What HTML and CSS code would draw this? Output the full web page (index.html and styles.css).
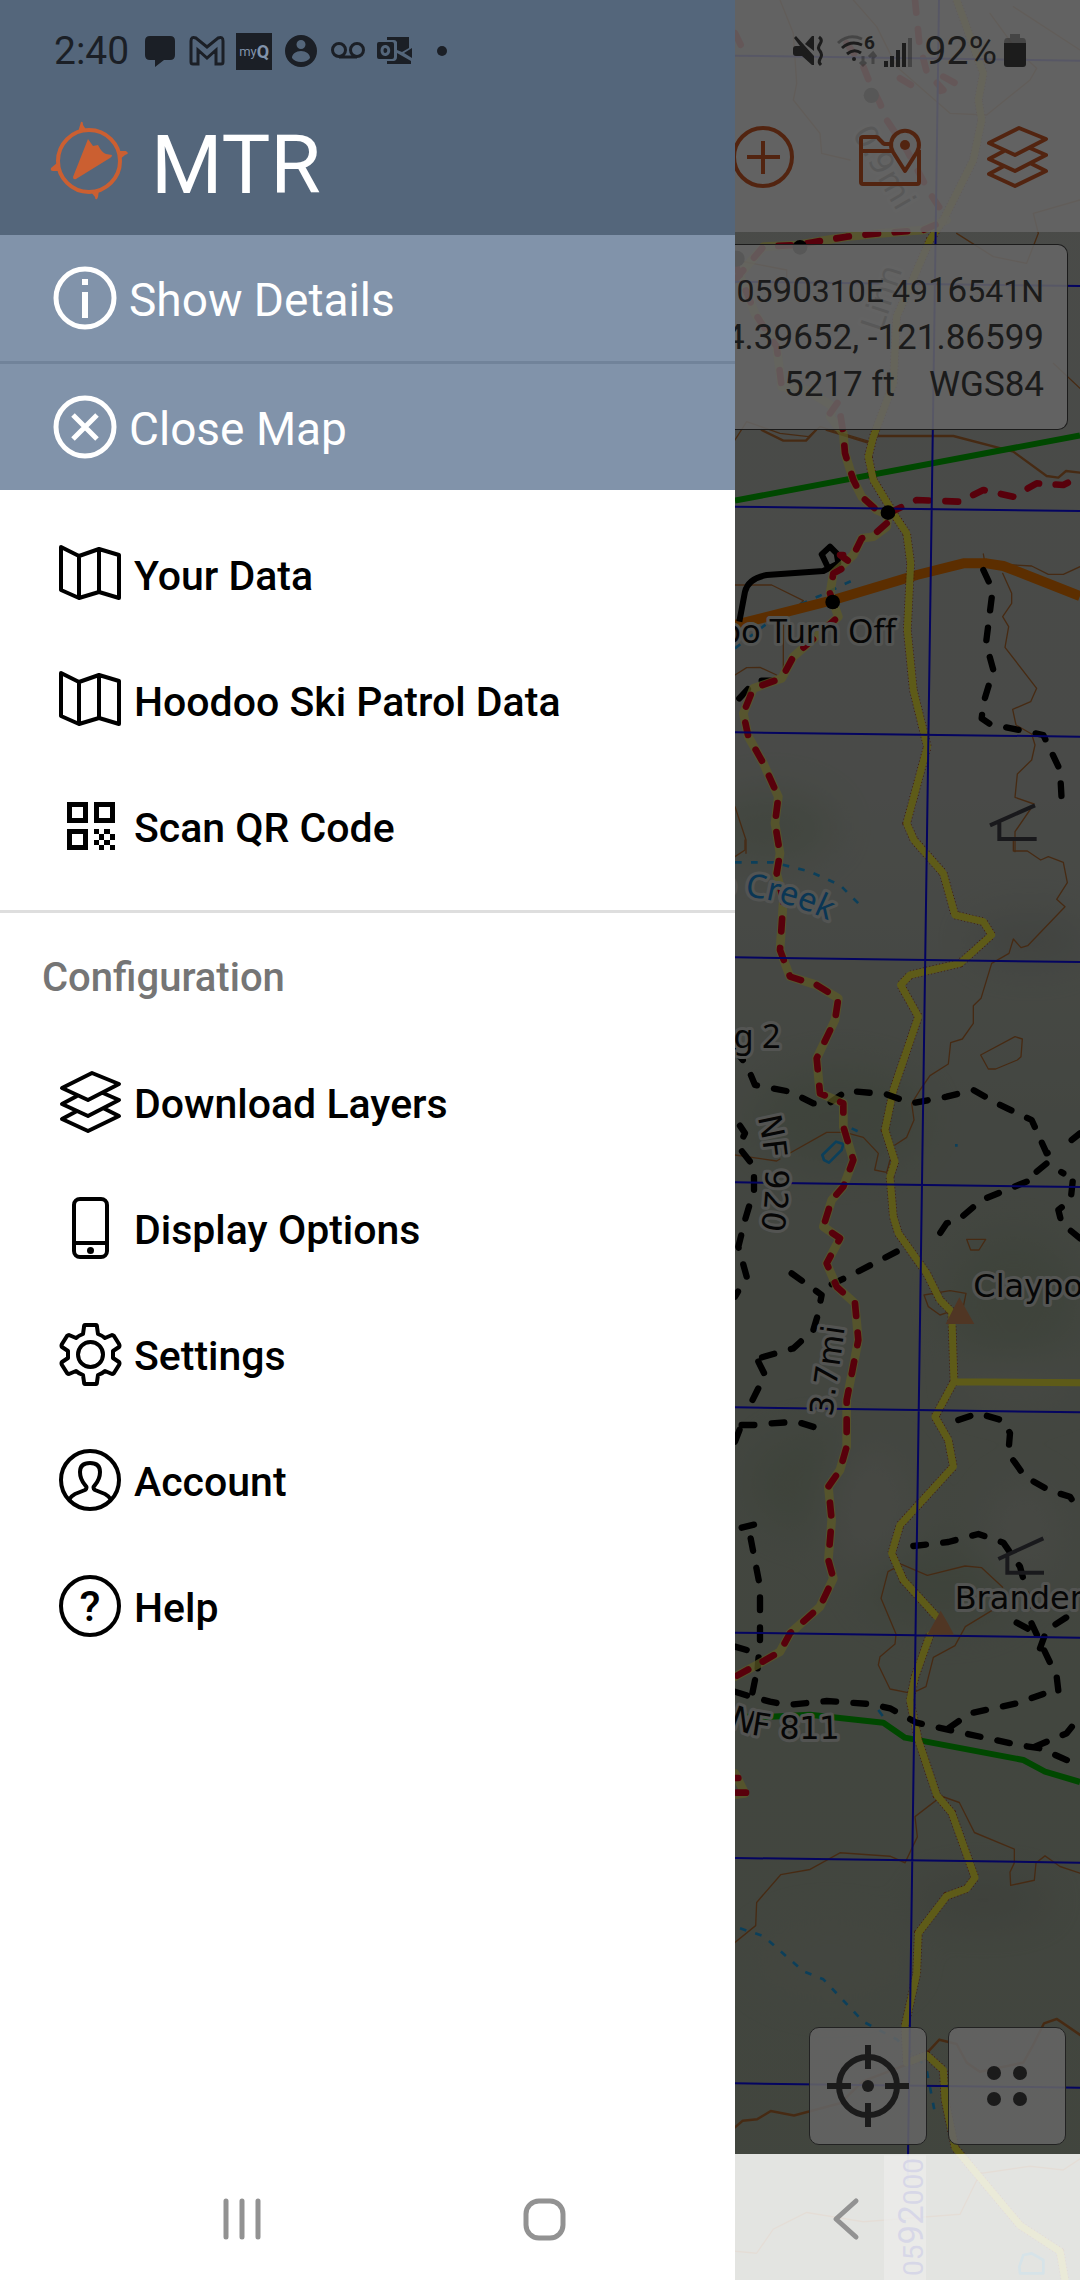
FILE: index.html
```html
<!DOCTYPE html>
<html lang="en">
<head>
	<meta charset="UTF-8">
	<meta name="viewport" content="width=device-width, initial-scale=1">
	<title>MTR</title>
	<link rel="stylesheet" href="styles.css">
</head>
<body>
<svg class="defs" aria-hidden="true">
	<symbol id="i-map" viewBox="0 0 64 64"><path d="M3 5L21 14L41 7L61 13V56L41 50L21 56L3 48ZM21 14V56M41 7V50"/></symbol>
	<symbol id="i-layers" viewBox="0 0 64 64"><path d="M34 3L61 14L30 30L4 18ZM19 26L4 34L30 46L61 30L45 23M19 41L4 49L30 61L61 46L45 38"/></symbol>
</svg>
<div class="screen">

	<!-- map -->
	<svg class="map" viewBox="15 0 1035 6840" preserveAspectRatio="xMinYMin slice" role="img" aria-label="Map">
		<defs>
			<linearGradient id="land" x1="0" y1="0" x2="0" y2="1">
				<stop offset="0" stop-color="#b8bbb6"/>
				<stop offset=".35" stop-color="#b6bab3"/>
				<stop offset=".5" stop-color="#a8afa2"/>
				<stop offset="1" stop-color="#a4ad9b"/>
			</linearGradient>
			<filter id="soft" x="-50%" y="-50%" width="200%" height="200%"><feGaussianBlur stdDeviation="60"/></filter>
		</defs>
		<rect x="15" width="1035" height="6840" fill="url(#land)"/>
		<g filter="url(#soft)" opacity=".4">
			<ellipse cx="120" cy="2480" rx="200" ry="110" fill="#8ca082"/>
			<ellipse cx="900" cy="2820" rx="180" ry="70" fill="#8f938f"/>
			<ellipse cx="330" cy="3350" rx="260" ry="150" fill="#8ca082"/>
			<ellipse cx="850" cy="3900" rx="200" ry="200" fill="#8ca082"/>
			<ellipse cx="260" cy="4450" rx="200" ry="150" fill="#8ca082"/>
			<ellipse cx="420" cy="4530" rx="130" ry="200" fill="#bdbdb8"/>
			<ellipse cx="860" cy="4150" rx="180" ry="60" fill="#bdbdb8"/>
			<ellipse cx="640" cy="4760" rx="240" ry="120" fill="#8ca082"/>
			<ellipse cx="880" cy="4600" rx="120" ry="160" fill="#bdbdb8"/>
			<ellipse cx="760" cy="5700" rx="200" ry="60" fill="#868c82"/>
			<ellipse cx="300" cy="5880" rx="240" ry="120" fill="#adb0a5"/>
		</g>

		<!-- contours and small roads -->
		<g class="contour">
			<path d="M150 0L190 100L200 250L190 300L270 400L275 460L360 480M370 0L440 80L500 200L660 340L770 345L900 240L920 205L860 150L780 40M850 20L1050 150M1050 600L910 640L925 700L890 790L790 770L680 700M15 780L170 810V870M970 1090L1050 1165M15 1320L50 1265L150 1300L235 1310L270 1280L420 1325"/>
			<g transform="translate(0 1290)">
				<path class="bold" d="M95 0L160 32H228L258 0M290 0L412 37M445 18H670L850 65L950 138L985 143L1008 123L1050 128"/>
				<path d="M15 465H125L220 512L160 570V720M15 735L50 713L90 712L140 735M760 372L765 400L905 408L955 433L1000 433L1050 410M818 430L845 490V520L818 560L836 590L825 652L920 775L902 815L848 838L858 885L905 912L915 945L905 990L862 1032L855 1102L912 1122L855 1205V1265M15 1130L48 1230V1270"/>
			</g>
			<g transform="translate(0 2520)">
				<path d="M850 0V33H892L932 60L955 50L1000 67L1012 128L980 178L1005 200L893 317L873 323L850 297L837 340L785 370L753 475L730 497V550L697 597L662 608L655 672L600 707L570 750L545 790L552 840L530 892L495 915M752 645L855 590L877 597L873 650L862 660L797 687H775ZM175 942L290 877H345L400 892L445 940L434 990L470 997L480 960M15 945L140 963L150 957M710 1198H767L747 1230H722ZM15 50L45 30V0"/>
			</g>
			<g transform="translate(0 3810)">
				<path d="M582 75L660 62L708 70L700 110M582 75L595 110L630 135L660 125M515 883L592 916L705 888L755 893L818 952M785 1022L706 1070L675 1127L610 1162L588 1250L545 1270L480 1257L445 1185L450 1160L495 1122L498 1092L453 985L474 905L515 883"/>
			</g>
			<g transform="translate(0 5100) scale(1 1.11)">
				<path d="M15 655L77 610L80 547L152 472L240 458L330 413L480 422L525 440L562 370L555 315L635 260L688 277L733 358L853 403V440L840 465L842 501L913 487L918 440L945 421L990 450L1050 468"/>
				<path class="bold" d="M15 1155L38 1137L82 1133L122 1111L192 1123L330 1090L400 1030L560 975L595 950L628 918L680 930L710 980L750 1005L880 980L905 940L942 874L980 862L1050 905"/>
				<path d="M15 1490L80 1495L130 1430L230 1385L400 1410L690 1390L750 1280L900 1260L1000 1270L1050 1240"/>
			</g>
		</g>

		<!-- creeks and ponds -->
		<g class="creek">
			<path d="M15 1945L150 1840L270 1787L370 1740"/>
			<path d="M15 2587H130L240 2615L330 2655L385 2710"/>
			<path d="M365 3385L385 3395M675 3436h8"/>
			<path d="M30 5785L100 5808L220 5914L280 5938L400 6065L500 6118L570 6180L590 6210L615 6340"/>
			<path class="pond" d="M277 3465L318 3425L340 3432L335 3450L297 3488L282 3480ZM445 5130L458 5148M868 6800L880 6765L905 6760L940 6780V6820H870Z"/>
		</g>

		<!-- highways -->
		<path class="road green" d="M15 1502L1050 1306M15 5150H120L240 5144L460 5168L525 5213L880 5280L945 5315L1050 5346"/>
		<path class="road orange" d="M15 1875L310 1800L560 1725L700 1690H770L820 1698L1050 1788"/>
		<path class="road black" d="M28 1865L45 1775Q55 1735 110 1725L280 1713L325 1690L320 1660L300 1640L275 1663L295 1705"/>

		<!-- yellow trail -->
		<g>
			<path class="trail-edge" d="M680 0L760 220L745 300L755 360L730 480L640 660L600 720L500 950L490 1150L430 1310L415 1370L430 1440L500 1555L530 1600L542 1690L532 1890L550 2070L592 2240L530 2470L552 2520L640 2620L675 2745L760 2765L785 2805L690 2890L540 2925L512 2955L565 3050L490 3270L465 3390L495 3485L480 3530L490 3650L505 3700L590 3820L630 3900L665 3935L672 4145L615 4250L655 4320L670 4400L510 4575L485 4660L520 4740L620 4850M600 4905L555 5030L540 5100L565 5220L620 5385L665 5438L735 5633L710 5666L650 5688L565 5799L560 5921L525 6077L530 6188L590 6165L640 6210L645 6299L675 6443L870 6676L990 6754L1005 6840"/>
			<path class="trail" d="M680 0L760 220L745 300L755 360L730 480L640 660L600 720L500 950L490 1150L430 1310L415 1370L430 1440L500 1555L530 1600L542 1690L532 1890L550 2070L592 2240L530 2470L552 2520L640 2620L675 2745L760 2765L785 2805L690 2890L540 2925L512 2955L565 3050L490 3270L465 3390L495 3485L480 3530L490 3650L505 3700L590 3820L630 3900L665 3935L672 4145L615 4250L655 4320L670 4400L510 4575L485 4660L520 4740L620 4850M600 4905L555 5030L540 5100L565 5220L620 5385L665 5438L735 5633L710 5666L650 5688L565 5799L560 5921L525 6077L530 6188L590 6165L640 6210L645 6299L675 6443L870 6676L990 6754L1005 6840M672 4145L1050 4148"/>
		</g>

		<!-- jeep tracks -->
		<g class="track">
			<path d="M760 1710L788 1770L768 1930L790 2010L760 2110L755 2155L780 2172L940 2205L990 2310L995 2400"/>
			<path d="M28 2095L65 2055M95 2042H130"/>
			<path d="M15 3150L50 3195L75 3255L180 3275L250 3310L300 3308L350 3272L470 3283L545 3310L650 3290L730 3270L800 3310L905 3360L950 3460L990 3440M1025 3420L1050 3400"/>
			<path d="M30 3377L45 3400L25 3440L72 3500V3570L45 3660L25 3740L50 3830L15 3890"/>
			<path d="M920 3515L950 3490L1000 3520M890 3545L755 3600L690 3655L650 3670L610 3730M500 3755L370 3822L290 3860M1028 3545L1022 3600L985 3630L995 3670L1050 3715"/>
			<path d="M185 3820L275 3885L262 3950L250 3990L190 4045L50 4085M85 4085L105 4125L60 4215M15 4325L40 4260M35 4275H90M125 4270L200 4265L290 4293"/>
			<path d="M685 4260L745 4240L820 4262L840 4300L835 4360L885 4430L960 4472L1020 4490L1045 4530"/>
			<path d="M550 4638L655 4626L745 4602L820 4628L870 4700L885 4755L900 4860L935 4935L980 5030L985 5072L1035 5065M860 4868L920 4900M930 4945L950 4890L1020 4845"/>
			<path d="M35 4583L88 4570M62 4615L90 4760V4920L83 5005M15 4940L50 4950M75 5040L65 5090L120 5105L170 5115L290 5103L420 5112L480 5125L560 5168L640 5186L860 5234L930 5245L1040 5293M15 5075L70 5092"/>
			<path d="M655 5185L720 5140L860 5110L940 5082M915 5240L1010 5200L1050 5150"/>
		</g>

		<!-- red trails -->
		<g class="glow"><path d="M15 840L100 740L200 735L350 710L450 700L580 690L650 660M15 790L75 940L140 1040L155 1160L230 1170L310 1220L300 1250L340 1300L345 1360L370 1440L395 1490L440 1530L475 1545L470 1580L430 1610L395 1615L370 1665L310 1720L300 1780L325 1850L190 1970L155 2035L70 2065L40 2140L55 2210L100 2290L145 2390L135 2470L150 2560L140 2620L160 2700L150 2850L180 2930L260 2955L325 2995L315 3060L260 3175L270 3280L340 3310L340 3380L370 3480L340 3560L305 3600L280 3680L330 3715L290 3790L320 3860L375 3910L385 4020L350 4200L350 4340L330 4410L295 4460L305 4560L295 4680L310 4735L270 4820L180 4900L150 4955L80 4995L15 5030M15 5320L45 5380L15 5384"/></g>
		<g class="red-trail">
			<path d="M555 0L568 130L590 215L640 270L590 285M510 235L560 265M640 230L695 260M350 130L400 200L420 250L450 310L470 360L530 450L600 580L640 640"/>
			<path d="M15 100L35 140M15 840L100 740L200 735L350 710L450 700L580 690L650 660"/>
			<path d="M15 790L75 940L140 1040L155 1160M300 1240L325 1205L340 1300L345 1360L370 1440L395 1490L440 1530L475 1540L560 1500L690 1505L760 1470L850 1490L920 1450L1000 1455L1050 1430"/>
			<path d="M470 1570L430 1605L395 1615L370 1665L330 1665L365 1690L310 1720L300 1780L325 1850L190 1970L155 2035L70 2065L40 2140L55 2210L100 2290L145 2390L135 2470L150 2560L140 2620L160 2700L150 2850L180 2930L260 2955L325 2995L315 3060L260 3175L270 3280L340 3310L340 3380L370 3480L340 3560L305 3600L280 3680L330 3715L290 3790L320 3860L375 3910L385 4020L350 4200L350 4340L330 4410L295 4460L305 4560L295 4680L310 4735L270 4820L180 4900L150 4955L80 4995L15 5030"/>
			<path d="M15 5334h10M20 5378h28"/>
		</g>

		<!-- utm grid -->
		<path class="grid" d="M627 0L533 6540M15 167L1050 182M15 845L1050 858M15 1520L1050 1533M15 2197L1050 2210M15 2872L1050 2886M15 3547L1050 3561M15 4222L1050 4237M15 4898L1050 4913M15 5574L1050 5588M15 6250L1050 6263"/>

		<g class="junction">
			<circle cx="424" cy="286" r="23"/>
			<circle cx="210" cy="742" r="22"/>
			<circle cx="20" cy="776" r="24"/>
			<circle cx="474" cy="1538" r="22"/>
			<circle cx="308" cy="1806" r="22"/>
		</g>

		<!-- shelters and peaks -->
		<path class="shelter" d="M780 2476L915 2416M808 2465V2517H920M805 4677L940 4615M832 4668V4718H942"/>
		<path class="peak" d="M688 3892L733 3972H647ZM632 4832L655 4872L672 4904H592L610 4872Z"/>

		<defs>
			<path id="l-creek" d="M-150 2700Q80 2655 296 2762"/>
			<path id="l-920" d="M82 3352Q132 3540 80 3740"/>
			<path id="l-mi" d="M306 4252L346 3970"/>
			<path id="l-811" d="M-30 5170L50 5200Q150 5226 360 5214"/>
		</defs>
		<g class="label">
			<text class="noto" x="498" y="1930" text-anchor="end">Hoodoo Turn Off</text>
			<text class="noto" x="152" y="3143" text-anchor="end">Big 2</text>
			<text x="730" y="3890">Claypool Butte</text>
			<text x="674" y="4828">Brandenburg Butte</text>
			<text class="noto blue"><textPath href="#l-creek" startOffset="100%" text-anchor="end">Hoodoo Creek</textPath></text>
			<text><textPath href="#l-920">NF 920</textPath></text>
			<text><textPath href="#l-mi">3.7mi</textPath></text>
			<text><textPath href="#l-811" startOffset="26">NF 811</textPath></text>
			<text transform="translate(365 400) rotate(60)">0.9mi</text>
			<text transform="translate(455 1000) rotate(-72)">Linn</text>
		</g>
		<rect x="462" y="6466" width="126" height="374" fill="#fff" opacity=".7"/>
		<text class="easting" transform="translate(578 6828) rotate(-90)">05<tspan class="big">92</tspan>000</text>
	</svg>

	<!-- controls that float on the map -->
	<main class="controls">
		<header class="topbar">
			<button type="button" aria-label="Add"><svg viewBox="0 0 64 64"><circle cx="32" cy="32" r="29"/><path d="M32 16V49M16 32H49"/></svg></button>
			<button type="button" aria-label="Map objects"><svg viewBox="0 0 64 64"><path d="M61 25V57Q61 59 59 59H5Q3 59 3 57V14Q3 12 5 12H18Q20 12 21 14L24 17Q25 19 28 19H34M3 26H35M47 46L35 27A14 14 0 1 1 59 27Z"/><circle class="fill" cx="47" cy="20" r="5"/></svg></button>
			<button type="button" aria-label="Layers"><svg><use href="#i-layers"/></svg></button>
		</header>
		<section class="coords">
			<p class="utm">10T 05<b>90</b>310E 49<b>16</b>541N</p>
			<p>44.39652, -121.86599</p>
			<p><span>5217 ft</span><span>WGS84</span></p>
		</section>
		<div class="tools">
			<button type="button" aria-label="My location"><svg viewBox="0 0 84 84"><circle cx="42" cy="42" r="29"/><path d="M42 1V25M42 59V83M1 42H25M59 42H83"/><circle class="fill" cx="42" cy="42" r="6"/></svg></button>
			<button type="button" aria-label="More tools"><svg viewBox="0 0 84 84"><g class="fill"><circle cx="29" cy="29" r="7"/><circle cx="55" cy="29" r="7"/><circle cx="29" cy="55" r="7"/><circle cx="55" cy="55" r="7"/></g></svg></button>
		</div>
	</main>
	<div class="scrim"></div>
	<div class="glass"></div>

	<!-- drawer -->
	<aside class="drawer">
		<header class="brand">
			<svg viewBox="0 0 80 80"><circle cx="40" cy="41" r="31" fill="none" stroke="currentColor" stroke-width="4"/><path fill="currentColor" d="M32 2Q34 1 34 5L38 11L29 12ZM79 33Q79 34 76 35L70 40L69 31L77 31ZM2 48L8 43L11 51L4 51Q1 51 2 48ZM48 79Q46 80 46 77L42 72L50 70L49 77ZM39 19L44 26L49 25Q53 33 57 34L63 35Q63 37 61 38L27 59Q24 60 24 57Z"/></svg>
			<h1>MTR</h1>
		</header>
		<nav class="map-actions">
			<a href="#details"><svg viewBox="0 0 64 64"><circle cx="32" cy="32" r="29"/><path d="M32 13V19M32 26V52" stroke-width="6"/></svg>Show Details</a>
			<a href="#close"><svg viewBox="0 0 64 64"><circle cx="32" cy="32" r="29"/><path d="M20 20L44 44M44 20L20 44"/></svg>Close Map</a>
		</nav>
		<nav class="menu">
			<a href="#your-data"><svg><use href="#i-map"/></svg>Your Data</a>
			<a href="#patrol-data"><svg><use href="#i-map"/></svg>Hoodoo Ski Patrol Data</a>
			<a href="#scan"><svg class="solid" viewBox="0 0 64 64"><path fill-rule="evenodd" d="M9 8h21v21h-21zm5 5v11h11v-11zM36 8h21v21h-21zm5 5v11h11v-11zM9 35h21v21h-21zm5 5v11h11v-11z"/><path d="M36 35h5v5h-5zm10 0h6v5h-6zm-5 5h5v6h-5zm11 0h5v6h-5zm-16 6h5v5h-5zm10 0h6v5h-6zm-5 5h5v5h-5zm11 0h5v5h-5z"/></svg>Scan QR Code</a>
		</nav>
		<h2>Configuration</h2>
		<nav class="menu config">
			<a href="#layers"><svg><use href="#i-layers"/></svg>Download Layers</a>
			<a href="#display"><svg viewBox="0 0 64 64"><rect x="16" y="3" width="33" height="58" rx="6"/><path d="M16 47H49"/><circle class="fill" cx="32.5" cy="54.5" r="3.5"/></svg>Display Options</a>
			<a href="#settings"><svg viewBox="0 0 64 64"><path d="M27 3H38Q39 3 39 5L40 12Q45 14 47 16L54 13Q55 13 56 14L61 22Q62 24 61 25L55 29V36L61 40Q62 41 61 43L56 51Q55 52 54 52L47 49Q45 51 40 53L39 60Q39 62 38 62H27Q26 62 26 60L25 53Q20 51 18 49L11 52Q10 52 9 51L4 43Q3 41 4 40L10 36V29L4 25Q3 24 4 22L9 14Q10 13 11 13L18 16Q20 14 25 12L26 5Q26 3 27 3Z"/><circle cx="32.5" cy="32.5" r="12.5"/></svg>Settings</a>
			<a href="#account"><svg viewBox="0 0 64 64"><circle cx="32" cy="32" r="29"/><path d="M11 52Q13 48 17 46L27 42Q30 40 27 37Q22 31 22 24Q22 15 32 15Q42 15 42 24Q42 31 37 37Q34 40 37 42L47 46Q51 48 53 52"/></svg>Account</a>
			<a href="#help"><svg viewBox="0 0 64 64"><circle cx="32" cy="32" r="29"/><text x="32" y="47" text-anchor="middle">?</text></svg>Help</a>
		</nav>
	</aside>

	<!-- system status bar -->
	<div class="status">
		<time>2:40</time>
		<svg viewBox="0 0 36 36"><path d="M8 3H28Q33 3 33 8V22Q33 27 28 27H22L13 34V27H8Q3 27 3 22V8Q3 3 8 3Z"/></svg>
		<svg viewBox="0 0 36 36"><path class="line thin" d="M2 29V8Q2 3 7 5L18 14L29 5Q34 3 34 8V29Q34 31 32 31H27V17L18 25L9 17V31H4Q2 31 2 29Z"/></svg>
		<span class="myq">my<b>Q</b></span>
		<svg viewBox="0 0 36 36"><path fill-rule="evenodd" d="M18 2A16 16 0 1 1 18 34A16 16 0 1 1 18 2ZM18 7A4.500 4.500 0 1 0 18 16A4.500 4.500 0 1 0 18 7ZM18 18C13 18 9 21 9 25Q12 29 18 29Q24 29 27 25C27 21 23 18 18 18Z"/></svg>
		<svg viewBox="0 0 36 36"><path class="line thin" d="M9 24H27"/><circle class="line thin" cx="9" cy="17" r="6.500"/><circle class="line thin" cx="27" cy="17" r="6.500"/></svg>
		<svg viewBox="0 0 36 36"><path fill-rule="evenodd" d="M2 9H15Q17 9 17 11V24Q17 26 15 26H2Q0 26 0 24V11Q0 9 2 9ZM8 12C2 12 2 23 8 23C15 23 15 12 8 12ZM8 15C11 15 11 20 8 20C6 20 6 15 8 15Z"/><path d="M10 4H32V15L25 19L20 17V9Q19 7 17 7H10ZM35 15V25L27 20ZM20 20L34 28V31H10V28H17Q20 27 20 24Z"/></svg>
		<svg viewBox="0 0 36 36"><circle cx="18" cy="18" r="5"/></svg>
		<div class="signals">
			<svg width="40" viewBox="0 0 40 36"><path d="M3 16Q3 13 6 13H10L4 5L6 3L24 23V32H22L12 23H6Q3 23 3 20ZM15 11L22 3H24V18Z"/><path class="line thin" d="M29 4Q33 7 30 11Q27 15 30 18Q33 22 30 26Q28 29 31 32"/></svg>
			<svg width="40" viewBox="0 0 40 36"><path class="line faint" d="M1 10Q12 0 25 6M26 23V31M23 29L26 32L29 29M36 31V20M32 24L36 20L39 24"/><path class="line thin" d="M5 15Q14 7 25 12M10 21Q17 15 24 20"/><circle cx="17" cy="26" r="2"/><text x="27" y="16">6</text></svg>
			<svg width="34" viewBox="0 0 34 36"><path d="M0 28h4v6h-4zM6 23h4v11h-4zM12 17h4v17h-4zM18 10h4v24h-4z"/><path opacity=".4" d="M24 5h4v29h-4z"/></svg>
			<span>92%</span>
			<svg width="22" viewBox="0 0 22 36"><path opacity=".4" d="M6 1H16V5H19Q22 5 22 10H0Q0 5 3 5H6Z"/><path d="M0 10H22V31Q22 34 19 34H3Q0 34 0 31Z"/></svg>
		</div>
	</div>

	<!-- system navigation -->
	<div class="sysnav">
		<button type="button" aria-label="Recents"><svg viewBox="0 0 44 44"><path d="M6 4V40M22 4V40M38 4V40"/></svg></button>
		<button type="button" aria-label="Home"><svg viewBox="0 0 44 44"><rect x="4" y="4" width="37" height="37" rx="13"/></svg></button>
		<button type="button" aria-label="Back"><svg viewBox="0 0 44 44"><path d="M32 4L12 22L32 40"/></svg></button>
	</div>
</div>
</body>
</html>
```
FILE: styles.css
```css
*{box-sizing: border-box;}
body,h1,h2,p{margin: 0;}
body{font-family: Roboto,"Liberation Sans",sans-serif;background: #fff;color: #000;}
a{color: inherit;text-decoration: none;}
button{padding: 0;border: 0;background: none;font: inherit;color: inherit;cursor: pointer;}
svg{display: block;flex: none;}
.defs{display: none;}

/* every layer sits in the same grid, the map column is to the right of the drawer */
.screen{display: grid;grid-template-columns: minmax(0,49fr) minmax(0,23fr);grid-template-rows: 1fr auto;min-height: 100vh;overflow: hidden;}
.map{grid-column: 2;grid-row: 1 / 3;width: 100%;height: 0;min-height: 100%;}
.controls{grid-column: 2;grid-row: 1;display: flex;flex-direction: column;min-width: 0;overflow: hidden;}
.scrim{grid-column: 2;grid-row: 1;background: rgba(0,0,0,.6);}
.glass{grid-column: 2;grid-row: 2;background: rgba(234,234,233,.9);}
.drawer{grid-column: 1;grid-row: 1 / 3;background: #fff;}
.status{grid-column: 1 / 3;grid-row: 1;align-self: start;}
.sysnav{grid-column: 1 / 3;grid-row: 2;}

/* map drawing */
.map path{fill: none;stroke-linecap: round;stroke-linejoin: round;}
.map .peak{fill: #c8875a;}
.contour path{stroke: #b06a30;stroke-width: 4;}
.contour .bold{stroke-width: 7;}
.creek path{stroke: #1e9fe0;stroke-width: 8;stroke-dasharray: 20 28;stroke-linecap: butt;}
.creek .pond{stroke-dasharray: none;}
.map .road{stroke-width: 20;stroke-linecap: butt;}
.map .green{stroke: #00b400;stroke-width: 18;}
.map .orange{stroke: #e67300;stroke-width: 30;}
.map .black{stroke: #000;stroke-width: 18;}
.map .trail{stroke: #ece43c;stroke-width: 21;}
.map .trail-edge{stroke: #a03c1e;stroke-width: 26;stroke-dasharray: 3 7;stroke-linecap: butt;}
.track path{stroke: #000;stroke-width: 19;stroke-dasharray: 38 52;}
.glow path{stroke: #e8e05a;stroke-width: 26;opacity: .7;}
.red-trail path{stroke: #dc001c;stroke-width: 20;stroke-dasharray: 38 50;}
.map .grid{stroke: #0a0af0;stroke-width: 6;}
.map .shelter{stroke: #404048;stroke-width: 12;stroke-linecap: butt;stroke-linejoin: miter;}
.label text{font-family: "DejaVu Sans",sans-serif;font-size: 96px;fill: #111;paint-order: stroke;stroke: #d0d2ce;stroke-width: 18px;stroke-linejoin: round;}
.label .noto{font-family: "Noto Sans","DejaVu Sans",sans-serif;font-size: 98px;}
.label .blue{fill: #1987d2;}
.easting{font-size: 84px;fill: #2828d2;}
.easting .big{font-size: 105px;}

/* map controls */
.topbar{display: flex;flex: none;justify-content: flex-end;align-items: flex-end;gap: 63px;height: 232px;padding: 0 31px 43px 0;background: rgba(255,255,255,.85);color: #ce5a2a;}
.topbar svg{width: 64px;height: 64px;}
.topbar svg,.tools svg,.menu svg,.map-actions svg{fill: none;stroke: currentColor;stroke-width: 4;stroke-linejoin: round;}
.fill{fill: currentColor;stroke: none;}
.coords{display: flex;flex-direction: column;align-items: flex-end;margin: 12px 12px 0 0;padding: 22px 23px 21px 0;border: 1px solid #444;border-left: 0;border-radius: 0 10px 10px 0;background: rgba(255,255,255,.85);color: #444;font-size: 35px;line-height: 47px;white-space: nowrap;}
.coords p{display: flex;gap: 34px;height: 47px;}
.coords .utm{display: block;font-size: 32px;}
.coords b{font-size: 35px;font-weight: 400;}
.tools{display: flex;justify-content: flex-end;gap: 21px;margin-top: auto;padding: 0 14px 9px 0;}
.tools button{display: grid;place-items: center;width: 118px;height: 118px;border: 1px solid #555;border-radius: 10px;background: rgba(255,255,255,.85);color: #444;}
.tools svg{width: 84px;height: 84px;stroke-width: 6;}

/* drawer */
.brand{display: flex;align-items: flex-end;gap: 22px;height: 235px;padding: 0 49px 35px;background: #54667b;color: #cb5f31;}
.brand svg{width: 80px;height: 80px;}
.brand h1{color: #fff;font-size: 82px;font-weight: 400;line-height: 70px;}
.map-actions{background: #8193aa;color: #fff;}
.map-actions a,.menu a{display: flex;align-items: center;gap: 12px;height: 126px;padding: 4px 0 0 53px;}
.map-actions a{font-size: 46px;}
.map-actions a + a{height: 129px;border-top: 3px solid #71839a;}
.map-actions svg,.menu svg{width: 64px;height: 64px;margin-bottom: 4px;}
.map-actions svg{stroke-width: 5;}
.menu{padding: 21px 0;border-bottom: 3px solid #dedede;font-size: 41px;font-weight: 500;}
.menu a{padding-left: 58px;}
.menu .solid{fill: currentColor;stroke: none;}
.menu text{fill: currentColor;stroke: none;font-size: 43px;font-weight: 500;}
.config{padding: 0 0 21px;border: 0;}
.drawer h2{padding: 4px 0 0 42px;color: #757575;font-size: 40px;font-weight: 500;line-height: 122px;}

/* system bars */
.status{display: flex;align-items: center;gap: 11px;height: 102px;padding: 0 54px;color: #1b1f26;font-size: 39px;}
.status time{margin-right: 2px;}
.status svg{height: 36px;fill: currentColor;}
.status > svg{width: 36px;}
.status .line{fill: none;stroke: currentColor;stroke-width: 4;}
.status .thin{stroke-width: 3;}
.status .faint{opacity: .4;stroke-width: 3;}
.status text{font-size: 19px;font-weight: 700;}
.myq{display: flex;align-items: center;justify-content: center;width: 36px;height: 37px;background: #1b1f26;color: #8193aa;font-size: 13px;}
.myq b{font-size: 18px;}
.signals{display: flex;align-items: center;gap: 7px;margin-left: auto;color: #1c1c1c;}
.sysnav{display: grid;grid-template-columns: repeat(3,1fr);height: 126px;padding: 4px 83px 0 91px;color: #929292;}
.sysnav button{display: grid;place-items: center;}
.sysnav svg{width: 44px;height: 44px;fill: none;stroke: currentColor;stroke-width: 5;stroke-linecap: round;stroke-linejoin: round;}
```
